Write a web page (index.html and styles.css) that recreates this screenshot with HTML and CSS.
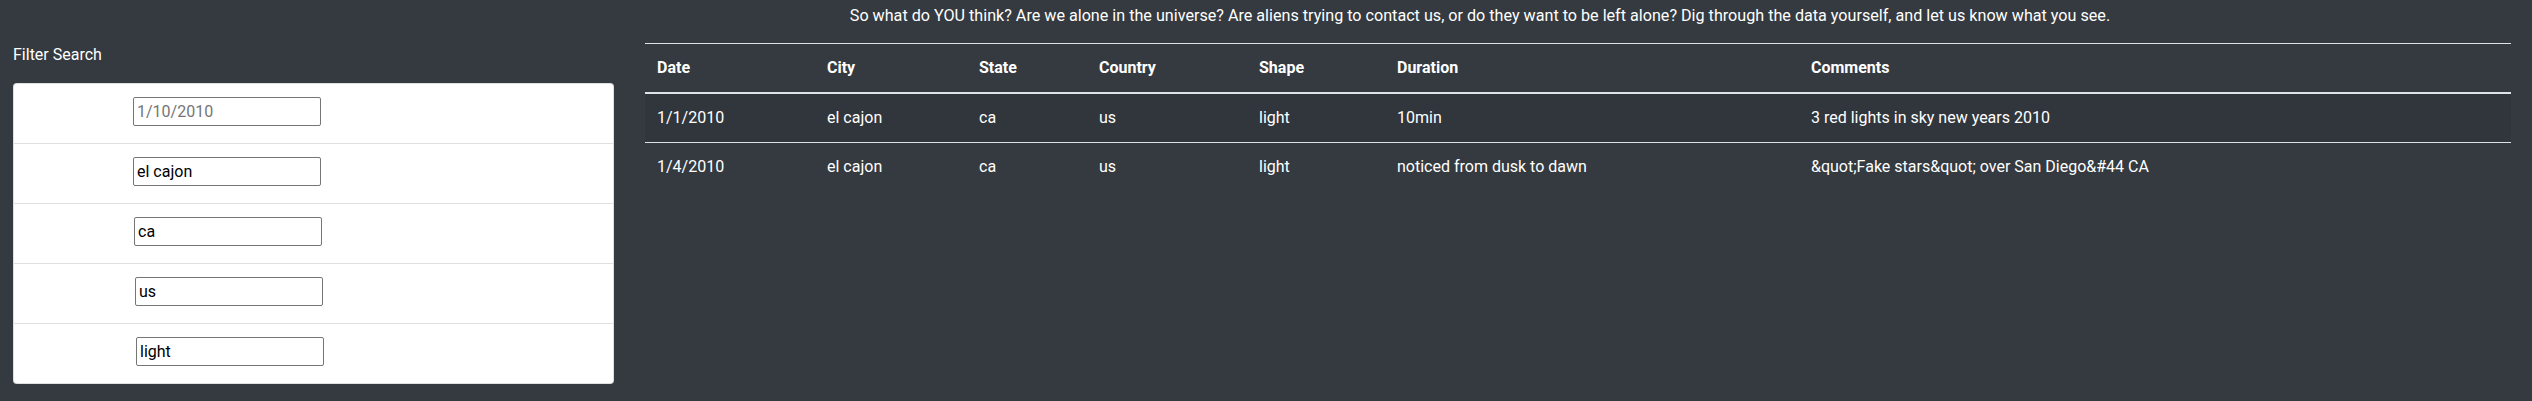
FILE: index.html
```html
<!DOCTYPE html>
<html lang="en">
<head>
<meta charset="utf-8">
<title>UFO Sightings</title>
<link rel="stylesheet" href="styles.css">
</head>
<body>
<div class="page">
  <aside class="sidebar">
    <div class="filter-title">Filter Search</div>
    <ul class="filter-card">
      <li class="filter-item"><input class="filter-input in-1" type="text" placeholder="1/10/2010"></li>
      <li class="filter-item"><input class="filter-input in-2" type="text" value="el cajon"></li>
      <li class="filter-item"><input class="filter-input in-3" type="text" value="ca"></li>
      <li class="filter-item"><input class="filter-input in-4" type="text" value="us"></li>
      <li class="filter-item"><input class="filter-input in-5" type="text" value="light"></li>
    </ul>
  </aside>
  <main class="main">
    <p class="intro">So what do YOU think? Are we alone in the universe? Are aliens trying to contact us, or do they want to be left alone? Dig through the data yourself, and let us know what you see.</p>
    <table class="sightings">
      <thead>
        <tr>
          <th class="c-date">Date</th>
          <th class="c-city">City</th>
          <th class="c-state">State</th>
          <th class="c-country">Country</th>
          <th class="c-shape">Shape</th>
          <th class="c-duration">Duration</th>
          <th class="c-comments">Comments</th>
        </tr>
      </thead>
      <tbody>
        <tr class="odd">
          <td>1/1/2010</td>
          <td>el cajon</td>
          <td>ca</td>
          <td>us</td>
          <td>light</td>
          <td>10min</td>
          <td>3 red lights in sky new years 2010</td>
        </tr>
        <tr>
          <td>1/4/2010</td>
          <td>el cajon</td>
          <td>ca</td>
          <td>us</td>
          <td>light</td>
          <td>noticed from dusk to dawn</td>
          <td>&amp;quot;Fake stars&amp;quot; over San Diego&amp;#44 CA</td>
        </tr>
      </tbody>
    </table>
  </main>
</div>
</body>
</html>
```

FILE: styles.css
```css
html, body {
  margin: 0;
  padding: 0;
}

body {
  background: #343a40;
  color: #ffffff;
  font-family: Roboto, "Noto Sans", "Liberation Sans", sans-serif;
  font-size: 16px;
  line-height: 24px;
}

.page {
  display: flex;
  align-items: flex-start;
}

.sidebar {
  width: 601px;
  margin-left: 13px;
  padding-top: 43px;
}

.filter-title {
  margin-bottom: 16px;
}

.filter-card {
  list-style: none;
  margin: 0;
  padding: 0;
  background: #ffffff;
  border: 1px solid rgba(0, 0, 0, 0.125);
  border-radius: 4px;
}

.filter-item {
  padding: 13px 0 17px;
  border-top: 1px solid #dfdfdf;
}

.filter-item:first-child {
  border-top: none;
}

.filter-input {
  display: block;
  box-sizing: border-box;
  width: 188px;
  height: 29px;
  margin: 0;
  padding: 1px 3px;
  border: 1px solid #767676;
  border-radius: 2px;
  background: #ffffff;
  color: #000000;
  font-family: inherit;
  font-size: 16px;
  line-height: 24px;
}

.filter-input::placeholder {
  color: #757575;
}

.in-1 { margin-left: 119px; }
.in-2 { margin-left: 119px; }
.in-3 { margin-left: 120px; }
.in-4 { margin-left: 121px; }
.in-5 { margin-left: 122px; }

.main {
  width: 1866px;
  margin-left: 31px;
}

.intro {
  margin: 4px 0 15px;
  padding-right: 196px;
  text-align: center;
  font-size: 16.15px;
}

.sightings {
  width: 100%;
  border-collapse: collapse;
  table-layout: fixed;
}

.sightings th,
.sightings td {
  box-sizing: border-box;
  padding: 12px;
  text-align: left;
  vertical-align: top;
  border-top: 1px solid #dee2e6;
}

.sightings th {
  font-weight: 700;
  border-bottom: 2px solid #dee2e6;
}

.sightings tbody tr:first-child td {
  border-top: none;
}

.sightings tr.odd td {
  background: #31353c;
}

.c-date { width: 170px; }
.c-city { width: 152px; }
.c-state { width: 120px; }
.c-country { width: 160px; }
.c-shape { width: 138px; }
.c-duration { width: 414px; }
.c-comments { width: auto; }
```
